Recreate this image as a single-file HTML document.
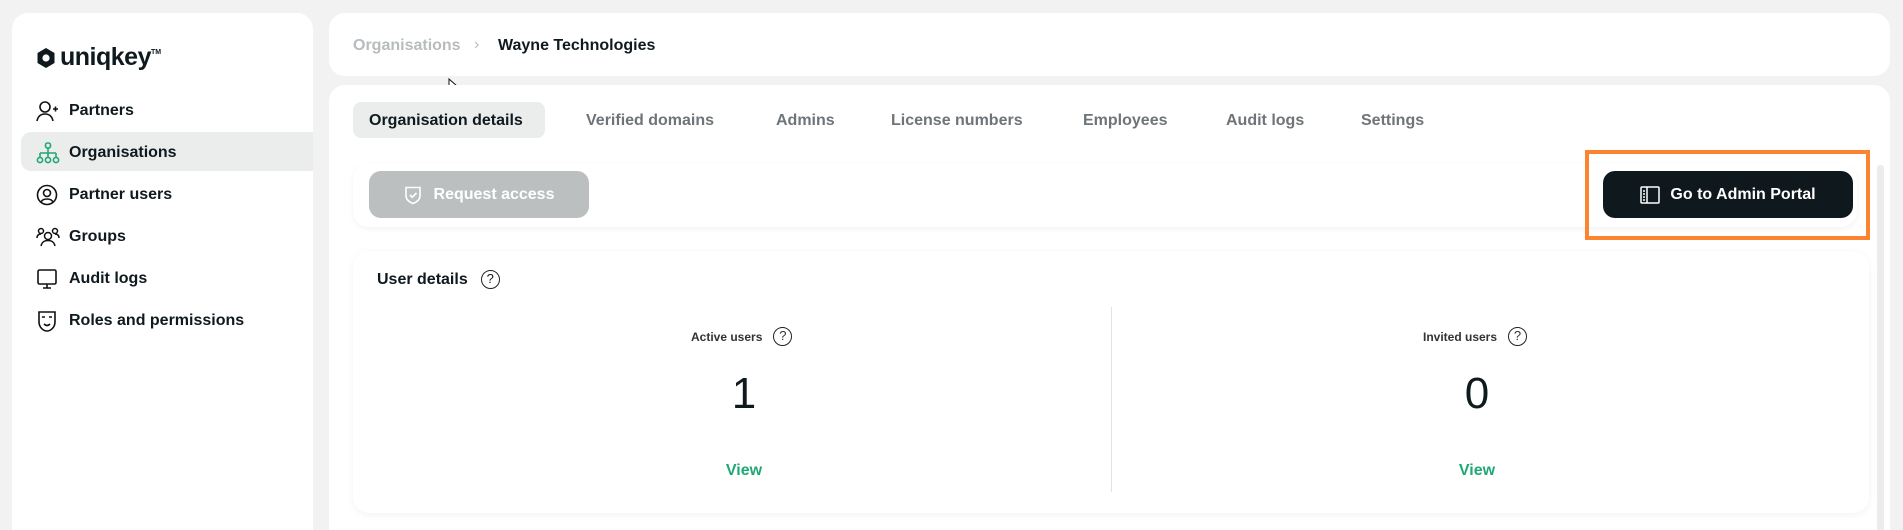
<!DOCTYPE html>
<html style="width:1903px;height:530px;overflow:hidden"><head><meta charset="utf-8"><style>
*{box-sizing:border-box;margin:0;padding:0}
body{width:1903px;height:530px;overflow:hidden;background:#f2f2f2;font-family:"Liberation Sans",sans-serif;position:relative;color:#0f1a1f}
.abs{position:absolute}
.card{position:absolute;background:#fff;border-radius:16px}
.nav{position:absolute;left:36px;font-weight:bold;font-size:16px;display:flex;align-items:center}
.nav svg{margin-right:9px}
.tab{position:absolute;top:112px;font-size:16px;font-weight:bold;color:#6e7478}
.q{display:inline-block;width:19px;height:19px;border:1.6px solid #222;border-radius:50%;font-size:13px;text-align:center;line-height:16px;font-weight:normal}
</style></head><body>
<div class="card" style="left:12px;top:13px;width:301px;height:517px;border-radius:16px 16px 0 0"></div>
<div class="abs" style="left:36px;top:43px;display:flex;align-items:center">
<svg width="20" height="22" viewBox="0 0 20 22"><path d="M10 1 L18.5 6 V16 L10 21 L1.5 16 V6Z" fill="#0f1a1f"/><circle cx="10" cy="11" r="3.6" fill="#fff"/></svg>
<span style="font-size:25px;font-weight:bold;margin-left:4px;letter-spacing:-0.5px">uniqkey</span><span style="font-size:7px;font-weight:bold;margin-top:-10px">TM</span></div>
<div class="abs" style="left:21px;top:132px;width:292px;height:39px;background:#ebedec;border-radius:10px 0 0 10px"></div>
<div class="nav" style="top:100px"><svg width="24" height="22" viewBox="0 0 24 22" fill="none" stroke="#111" stroke-width="1.6"><circle cx="9" cy="7" r="5"/><path d="M1 21c1-5 4-7 8-7s7 2 8 7M17 9h5M19.5 6.5v5"/></svg>Partners</div>
<div class="nav" style="top:142px"><svg width="24" height="22" viewBox="0 0 24 22" fill="none" stroke="#1fa874" stroke-width="1.6"><rect x="9.5" y="1" width="5" height="5" rx="2"/><path d="M12 6v5M4 11h16M4 11v4M12 11v4M20 11v4"/><circle cx="4" cy="18" r="2.6"/><circle cx="12" cy="18" r="2.6"/><circle cx="20" cy="18" r="2.6"/></svg>Organisations</div>
<div class="nav" style="top:184px"><svg width="24" height="22" viewBox="0 0 24 22" fill="none" stroke="#111" stroke-width="1.6"><circle cx="11" cy="11" r="9.5"/><circle cx="11" cy="9" r="3.5"/><path d="M5 18c2-4 10-4 12 0"/></svg>Partner users</div>
<div class="nav" style="top:226px"><svg width="24" height="22" viewBox="0 0 24 22" fill="none" stroke="#111" stroke-width="1.5"><circle cx="12" cy="10" r="3.5"/><path d="M5 20c1-4 3-5.5 7-5.5s6 1.5 7 5.5"/><circle cx="5" cy="5" r="2.5"/><circle cx="19" cy="5" r="2.5"/><path d="M1 12c0-3 2-4 4-4M23 12c0-3-2-4-4-4"/></svg>Groups</div>
<div class="nav" style="top:268px"><svg width="24" height="22" viewBox="0 0 24 22" fill="none" stroke="#111" stroke-width="1.6"><rect x="2" y="2" width="18" height="14" rx="1.5"/><path d="M11 16v4M7 20h8"/></svg>Audit logs</div>
<div class="nav" style="top:310px"><svg width="24" height="22" viewBox="0 0 24 22" fill="none" stroke="#111" stroke-width="1.6"><path d="M3 2h16v10c0 5-4 9-8 9s-8-4-8-9z"/><path d="M6 7h3M13 7h3M8 14c2 2 4 2 6 0"/></svg>Roles and permissions</div>

<div class="card" style="left:329px;top:13px;width:1561px;height:63px"></div>
<div class="abs" style="left:353px;top:37px;font-size:16px;font-weight:bold;color:#b8bcbe">Organisations</div>
<div class="abs" style="left:474px;top:36px;font-size:16px;color:#b8bcbe">›</div>
<div class="abs" style="left:498px;top:37px;font-size:16px;font-weight:bold">Wayne Technologies</div>
<svg class="abs" style="left:448px;top:78px" width="16" height="22" viewBox="0 0 16 22"><path d="M1 1v16l4-4 3 7 2.5-1-3-7h6z" fill="#fff" stroke="#111" stroke-width="1"/></svg>

<div class="card" style="left:329px;top:85px;width:1561px;height:445px;border-radius:16px 16px 0 0"></div>
<div class="abs" style="left:353px;top:102px;width:192px;height:36px;background:#ebedec;border-radius:8px"></div>
<div class="tab" style="left:369px;color:#0f1a1f">Organisation details</div>
<div class="tab" style="left:586px">Verified domains</div>
<div class="tab" style="left:776px">Admins</div>
<div class="tab" style="left:891px">License numbers</div>
<div class="tab" style="left:1083px">Employees</div>
<div class="tab" style="left:1226px">Audit logs</div>
<div class="tab" style="left:1361px">Settings</div>
<div class="abs" style="left:1877px;top:165px;width:7px;height:370px;background:#ececec;border-radius:3px"></div>

<div class="card" style="left:353px;top:163px;width:1504px;height:64px;box-shadow:0 2px 6px rgba(0,0,0,0.05)"></div>
<div class="abs" style="left:369px;top:171px;width:220px;height:47px;background:#bcbfc0;border-radius:12px;color:#fff;font-weight:bold;font-size:16px;display:flex;align-items:center;justify-content:center">
<svg width="18" height="20" viewBox="0 0 18 20" fill="none" stroke="#fff" stroke-width="1.6" style="margin-right:12px"><path d="M2 2.5h14v8c0 4-3 6.5-7 8-4-1.5-7-4-7-8z"/><path d="M6 10l2.2 2.2L12.5 8"/></svg>Request access</div>
<div class="abs" style="left:1603px;top:171px;width:250px;height:47px;background:#0f181d;border-radius:12px;color:#fff;font-weight:bold;font-size:16px;display:flex;align-items:center;justify-content:center">
<svg width="20" height="18" viewBox="0 0 20 18" fill="none" stroke="#fff" stroke-width="1.5" style="margin-right:10px"><rect x="1" y="1" width="18" height="16" rx="1"/><path d="M7 1v16M3 5h2M3 8h2M3 11h2M3 14h2"/></svg>Go to Admin Portal</div>
<div class="abs" style="left:1585px;top:150px;width:285px;height:90px;border:4px solid #fb8431"></div>

<div class="card" style="left:353px;top:251px;width:1516px;height:262px;box-shadow:0 2px 8px rgba(0,0,0,0.05)"></div>
<div class="abs" style="left:377px;top:270px;font-size:16px;font-weight:bold;display:flex;align-items:center">User details <span class="q" style="margin-left:13px">?</span></div>
<div class="abs" style="left:1111px;top:307px;width:1px;height:185px;background:#e3e3e3"></div>
<div class="abs" style="left:691px;top:327px;font-size:12px;font-weight:bold;color:#333;display:flex;align-items:center">Active users <span class="q" style="margin-left:11px">?</span></div>
<div class="abs" style="left:604px;width:280px;top:369px;text-align:center;font-size:44px">1</div>
<div class="abs" style="left:604px;width:280px;top:462px;text-align:center;font-size:16px;font-weight:bold;color:#1fa874">View</div>
<div class="abs" style="left:1423px;top:327px;font-size:12px;font-weight:bold;color:#333;display:flex;align-items:center">Invited users <span class="q" style="margin-left:11px">?</span></div>
<div class="abs" style="left:1337px;width:280px;top:369px;text-align:center;font-size:44px">0</div>
<div class="abs" style="left:1337px;width:280px;top:462px;text-align:center;font-size:16px;font-weight:bold;color:#1fa874">View</div>
</body></html>
